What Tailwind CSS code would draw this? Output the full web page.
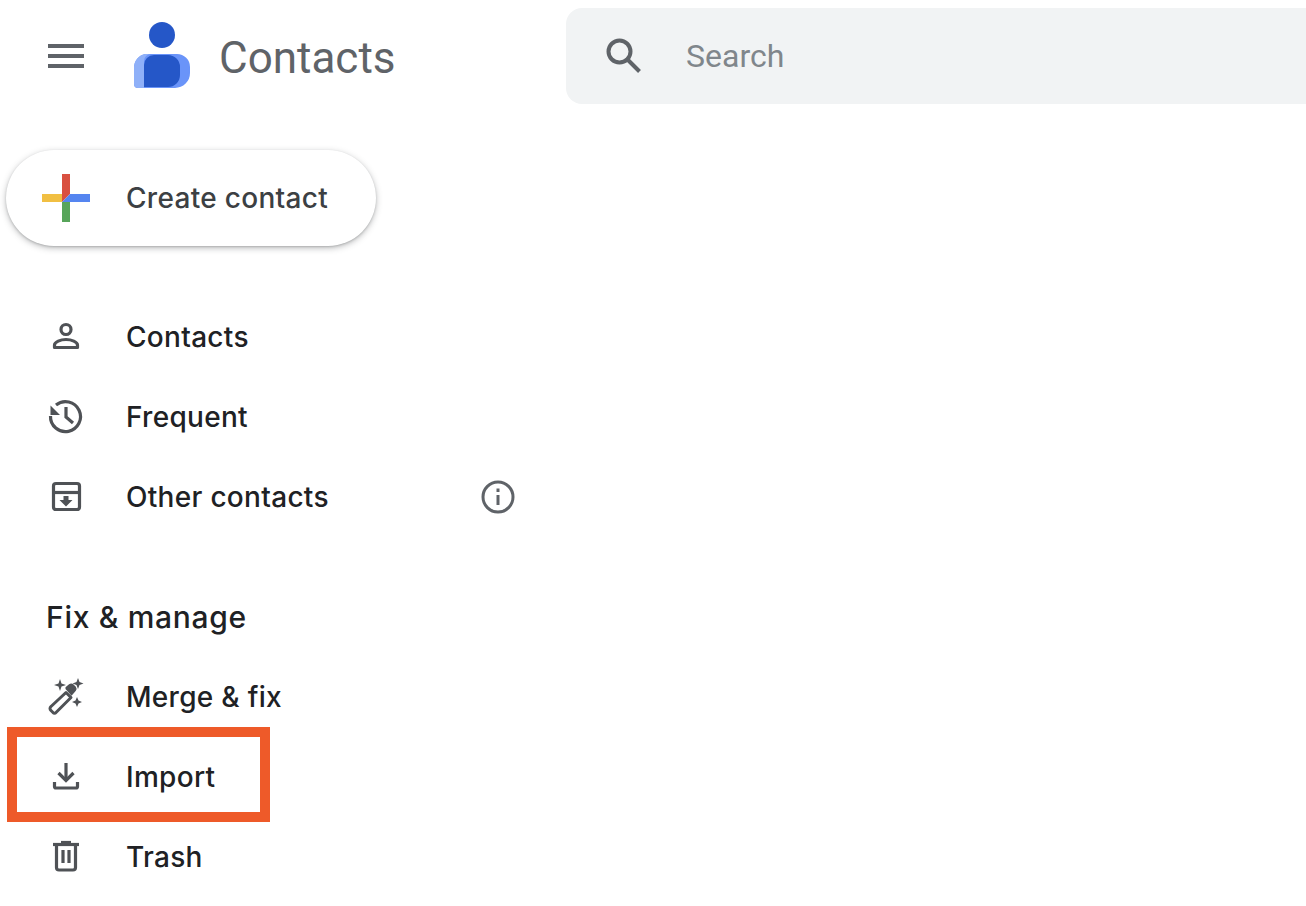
<!DOCTYPE html>
<html lang="en">
<head>
  <meta charset="UTF-8">
  <meta name="viewport" content="width=device-width, initial-scale=1.0">
  <title>Contacts</title>
  <script src="https://cdn.jsdelivr.net/npm/@tailwindcss/browser@4"></script>
</head>
<body class="bg-white font-['Roboto',sans-serif] overflow-hidden">
  <div class="w-[1306px] h-[906px] overflow-hidden">
    <!-- Header -->
    <header class="flex items-start h-[150px] pt-2">
      <div class="flex items-center h-24 w-[566px] shrink-0">
        <svg class="ml-[42px] w-12 h-12 shrink-0" viewBox="0 0 48 48" fill="#5f6368">
          <rect x="6" y="12" width="36" height="4"/><rect x="6" y="22" width="36" height="4"/><rect x="6" y="32" width="36" height="4"/>
        </svg>
        <svg class="ml-[42px] w-[60px] h-[72px] shrink-0" viewBox="0 2 60 72">
          <path d="M13 36h32a13 13 0 0 1 13 13v6a15 15 0 0 1-15 15H6a4 4 0 0 1-4-4V50a14 14 0 0 1 11-14z" fill="#6a94f9"/>
          <path d="M13 36h6a7 7 0 0 0-7 7v27H6a4 4 0 0 1-4-4V50a14 14 0 0 1 11-14z" fill="#8fb0f8"/>
          <circle cx="30" cy="17" r="13" fill="#2557c8"/>
          <path d="M22 37h14a12 12 0 0 1 12 12v8a12 12 0 0 1-12 12H12V47a10 10 0 0 1 10-10z" fill="#2557c8"/>
        </svg>
        <span class="ml-[27px] mt-[3px] text-[44px] leading-none text-[#5f6368]">Contacts</span>
      </div>
      <div class="flex items-center flex-1 h-24 bg-[#f1f3f4] rounded-l-2xl">
        <svg class="ml-[34px] w-12 h-12" viewBox="0 0 48 48" fill="none" stroke="#5f6368" stroke-width="4">
          <circle cx="19.500" cy="19.500" r="11"/><path d="M27.500 27.500l12 12"/>
        </svg>
        <span class="ml-[38px] text-[32px] leading-none text-[#80868b]">Search</span>
      </div>
    </header>

    <!-- Create button -->
    <button class="flex items-center ml-1.5 w-[370px] h-24 rounded-full bg-white shadow-[0_2px_6px_rgba(60,64,67,0.35),0_1px_2px_rgba(60,64,67,0.2)]">
      <svg class="ml-9 w-12 h-12 shrink-0" viewBox="0 0 48 48">
        <path d="M20 0h8v20l-8 8z" fill="#d95040"/>
        <path d="M28 20h20v8H20z" fill="#5585f0"/>
        <rect x="20" y="28" width="8" height="20" fill="#57a55a"/>
        <rect x="0" y="20" width="20" height="8" fill="#f1bf42"/>
      </svg>
      <span class="ml-9 text-[28px] leading-none tracking-[0.3px] font-medium text-[#3c4043] font-['Inter',sans-serif]">Create contact</span>
    </button>

    <!-- Nav -->
    <nav class="mt-[51px] text-[28px] leading-none tracking-[0.3px] font-medium text-[#202124] font-['Inter',sans-serif]">
      <div class="flex items-center h-20">
        <svg class="ml-[42px] w-12 h-12 shrink-0" viewBox="0 0 48 48" fill="none" stroke="#4f5256" stroke-width="3.200">
          <circle cx="24" cy="16.500" r="5"/>
          <path d="M12.500 34.500v-2.500c0-3 6-5.500 11.500-5.500s11.500 2.500 11.500 5.500v2.500z" stroke-linejoin="round"/>
        </svg>
        <span class="ml-9">Contacts</span>
      </div>
      <div class="flex items-center h-20">
        <svg class="ml-[42px] w-12 h-12 shrink-0" viewBox="0 0 48 48" fill="none" stroke="#4f5256" stroke-width="3.200">
          <path d="M14 12a15 15 0 1 1-5.500 11"/>
          <path d="M8.500 12.500v9.500h9.500z" fill="#4f5256" stroke="none"/>
          <path d="M24 14v10l7 6"/>
        </svg>
        <span class="ml-9">Frequent</span>
      </div>
      <div class="flex items-center h-20">
        <svg class="ml-[42px] w-12 h-12 shrink-0" viewBox="0 0 48 48" fill="none" stroke="#4f5256" stroke-width="3.200">
          <rect x="11.500" y="10.500" width="26" height="26" rx="2.500"/>
          <path d="M11.500 19.500h26"/>
          <path d="M21.500 23h5v4h4l-6.500 6.500-6.500-6.500h4z" fill="#4f5256" stroke="none"/>
        </svg>
        <span class="ml-9">Other contacts</span>
        <svg class="absolute left-[474px] w-12 h-12 shrink-0" viewBox="0 0 48 48" fill="none" stroke="#5f6368" stroke-width="3">
          <circle cx="24" cy="24" r="15"/>
          <path d="M24 22v10" />
          <path d="M24 15.500v3.500"/>
        </svg>
      </div>

      <h2 class="flex items-center h-20 mt-10 pl-[46px] text-[30px] tracking-[0.7px]">Fix &amp; manage</h2>

      <div class="flex items-center h-20">
        <svg class="ml-[42px] w-12 h-12 shrink-0" viewBox="0 0 48 48" fill="none" stroke="#4f5256" stroke-width="3">
          <path d="M9 33.500 24 19.500l5 5-15 15a2 2 0 0 1-3 0l-2-2a2.500 2.500 0 0 1 0-4z" stroke-linejoin="round"/>
          <path d="M25 15l3-2.500a2 2 0 0 1 2.500 0l2 2a2 2 0 0 1 0 2.500l-3 3.500-4.500-5z" fill="#4f5256"/>
          <path d="M18 6l1.500 4.500 4.500 1.500-4.500 1.500-1.500 4.500-1.500-4.500-4.500-1.500 4.500-1.500z" fill="#4f5256" stroke="none"/>
          <path d="M36 5l1.500 4 4 1.500-4 1.500-1.500 4-1.500-4-4-1.500 4-1.500z" fill="#4f5256" stroke="none"/>
          <path d="M35 24l1.500 3.500 3.500 1.500-3.500 1.500-1.500 3.500-1.500-3.500-3.500-1.500 3.500-1.500z" fill="#4f5256" stroke="none"/>
        </svg>
        <span class="ml-9">Merge &amp; fix</span>
      </div>
      <div class="relative flex items-center h-20">
        <svg class="ml-[42px] w-12 h-12 shrink-0" viewBox="0 0 48 48" fill="none" stroke="#4f5256" stroke-width="3.200">
          <path d="M24 10v18"/>
          <path d="M16.500 20l7.500 7.500 7.500-7.500"/>
          <path d="M12.500 29v4.500a1.500 1.500 0 0 0 1.500 1.500h20a1.500 1.500 0 0 0 1.500-1.500V29"/>
        </svg>
        <span class="ml-9">Import</span>
        <div class="absolute left-[7px] -top-[10px] w-[263px] h-[95px] border-[10px] border-[#ee5a29]"></div>
      </div>
      <div class="flex items-center h-20">
        <svg class="ml-[42px] w-12 h-12 shrink-0" viewBox="0 0 48 48" fill="none" stroke="#4f5256" stroke-width="3.200">
          <path d="M11 11.500h26"/>
          <path d="M19 9.500h10" />
          <path d="M14.500 11.500v23a2.500 2.500 0 0 0 2.500 2.500h14a2.500 2.500 0 0 0 2.500-2.500v-23"/>
          <path d="M21 17v13M27 17v13"/>
        </svg>
        <span class="ml-9">Trash</span>
      </div>
    </nav>
  </div>
</body>
</html>
